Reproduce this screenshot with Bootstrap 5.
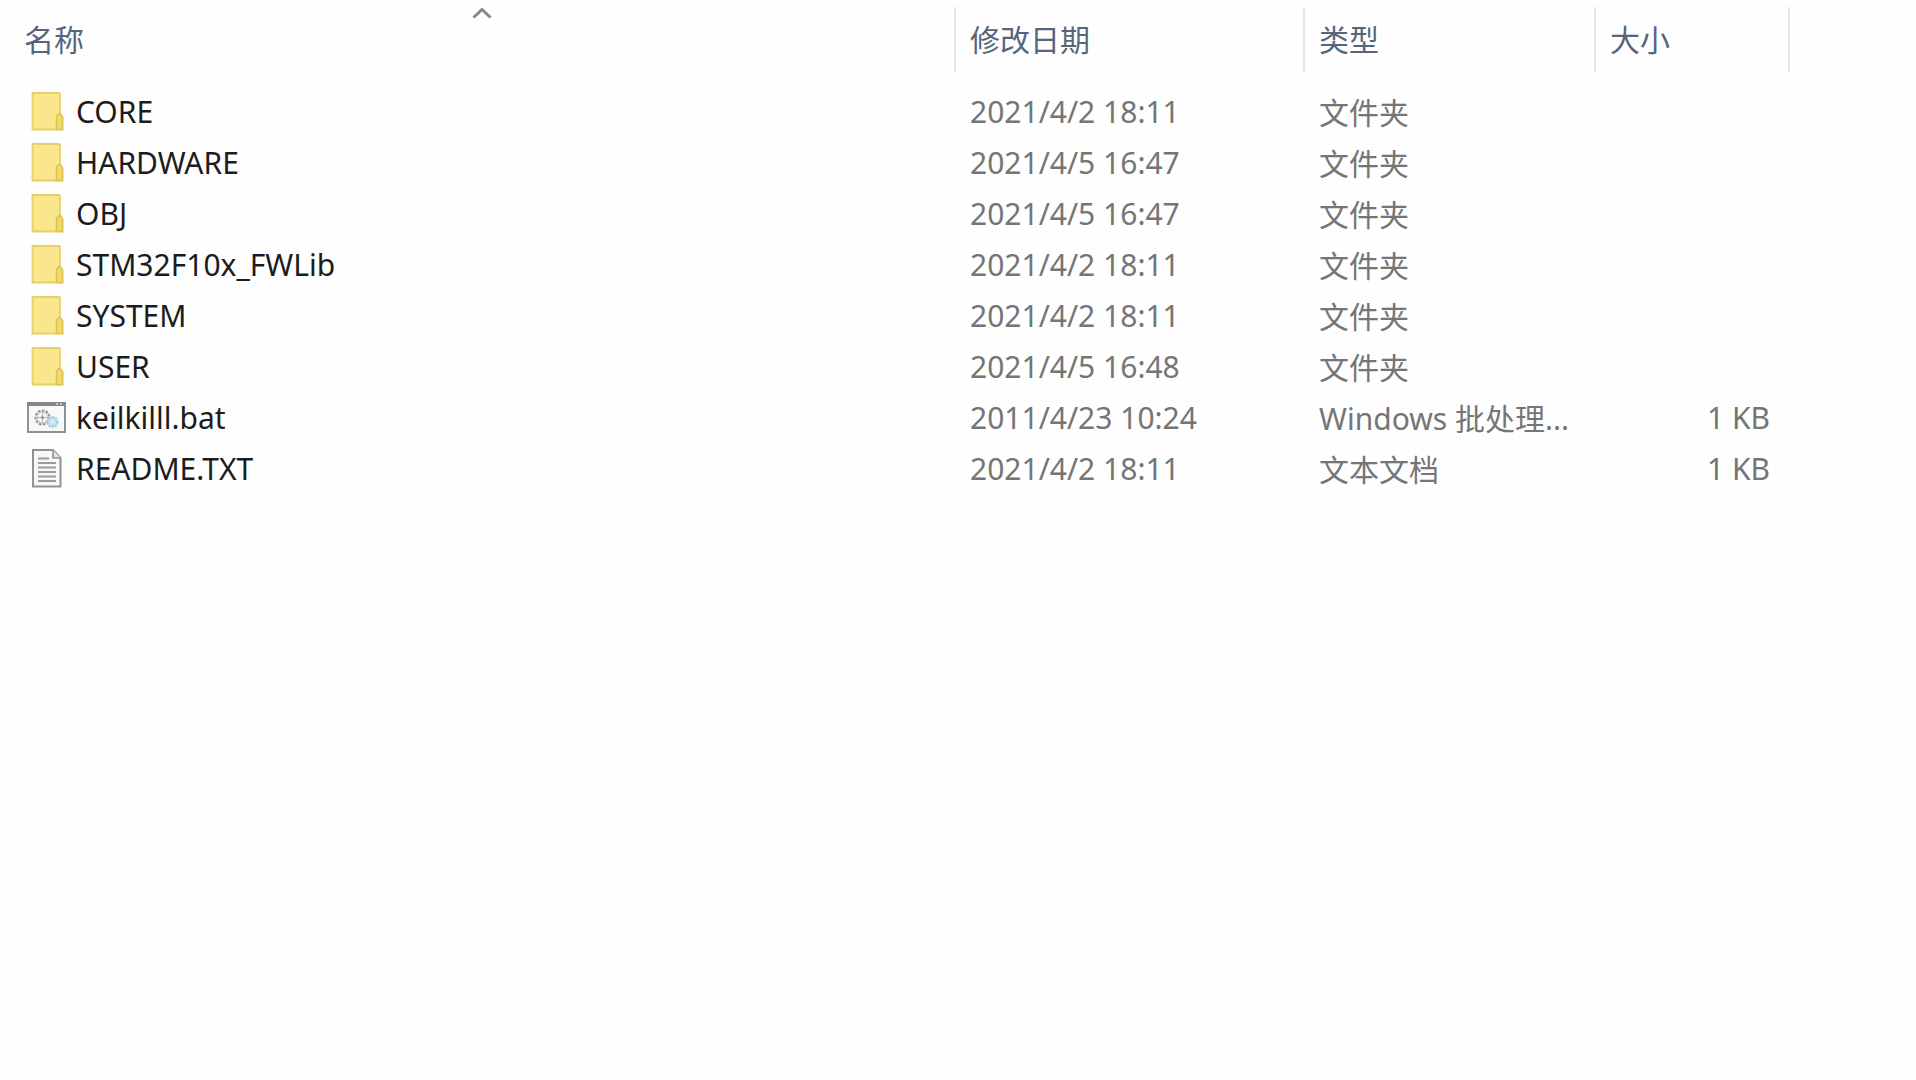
<!DOCTYPE html>
<html lang="zh-CN">
<head>
<meta charset="utf-8">
<meta name="viewport" content="width=device-width, initial-scale=1">
<title>文件列表</title>
<link href="https://cdn.jsdelivr.net/npm/bootstrap@5.3.0/dist/css/bootstrap.min.css" rel="stylesheet">
<style>
  body { background: #fefefe; font-family: "Noto Sans", "Noto Sans CJK SC", sans-serif; font-size: 30px; line-height: 40px; }
  .file-pane { padding: 7px 0 0 8px; }
  .file-list { table-layout: fixed; color: #757575; }
  .col-date { width: 349px; }
  .col-type { width: 291px; }
  .col-size { width: 194px; }
  .col-rest { width: 126px; }
  .file-list th { padding: 0 0 14px; font-weight: 400; }
  .sort-btn { height: 65px; padding: 0 0 3px 14px; border: 0; border-right: 2px solid #e6e6e6; background: none; color: #56657c; font-family: "Noto Sans CJK SC", sans-serif; line-height: 40px; }
  .name-head .sort-btn { padding-left: 16px; }
  .sort-mark { width: 20px; height: 12px; }
  .file-list td { height: 51px; padding: 0 0 0 14px; vertical-align: middle; }
  .file-list td.name-cell { padding-left: 18px; }
  .name-cell a { gap: 10px; color: #1c1c1c; }
  .file-list td.size-cell { padding-right: 20px; }
  .file-list td.type-cell { padding-top: 2px; }
  .file-icon { width: 40px; height: 40px; flex: none; }
</style>
<script src="https://cdn.jsdelivr.net/npm/bootstrap@5.3.0/dist/js/bootstrap.bundle.min.js"></script>
</head>
<body>
<svg class="d-none" aria-hidden="true">
  <symbol id="folder" viewBox="0 0 40 40">
    <path d="M6.500 1h26.500q1 0 1 1v20l2.500 3v12.500h-30z" fill="#fae68c" stroke="#e6d068" stroke-width="1.800"/>
    <path d="M30.500 37.500V26q0-3 2.500-4.500l1.500.5 2 3v12.500z" fill="#f3d96c" stroke="#dcc453" stroke-width="1.500"/>
  </symbol>
  <symbol id="batch" viewBox="0 0 40 40">
    <rect x="2" y="5" width="37" height="29" fill="#f7f8f9" stroke="#8e9194" stroke-width="2"/>
    <path d="M1 4h39v4H1z" fill="#85888b"/>
    <path d="M30 6h2M34 6h2" stroke="#d5d7d8" stroke-width="1.500"/>
    <circle cx="16.500" cy="19.500" r="7" fill="#f4f4f4" stroke="#8d9194" stroke-width="2" stroke-dasharray="2.600 1.400"/>
    <circle cx="16.500" cy="19.500" r="5.600" fill="none" stroke="#b0b3b5" stroke-width="1"/>
    <path d="M16.500 14v11M11 19.500h11" stroke="#b4b8bb" stroke-width="1"/>
    <circle cx="16.500" cy="19.500" r="1.500" fill="#8d9194"/>
    <circle cx="26.500" cy="24" r="5" fill="#c5e3ee" stroke="#a5cbd8" stroke-width="2" stroke-dasharray="2.200 1"/>
    <circle cx="26.500" cy="24" r="1.500" fill="#dceff5"/>
  </symbol>
  <symbol id="textfile" viewBox="0 0 40 40">
    <path d="M7 1h20l7.500 8v28.500H7z" fill="#f8f8f8" stroke="#929292" stroke-width="2"/>
    <path d="M27 1v8h7.500" fill="#e4e4e4" stroke="#929292" stroke-width="1.600"/>
    <path d="M12 9.500h11M12 14h18M12 18.500h18M12 23h18M12 27.500h18M12 32h18" stroke="#9c9c9c" stroke-width="2"/>
  </symbol>
</svg>
<main class="file-pane">
  <table class="file-list w-100">
    <colgroup><col><col class="col-date"><col class="col-type"><col class="col-size"><col class="col-rest"></colgroup>
    <thead>
      <tr>
        <th scope="col" class="name-head position-relative" aria-sort="ascending">
          <button type="button" class="sort-btn w-100 text-start">名称</button>
          <svg class="sort-mark position-absolute top-0 start-50 translate-middle-x" viewBox="0 0 20 12" aria-hidden="true"><path d="M1.500 10.500L10 2.500l8.500 8" fill="none" stroke="#858585" stroke-width="3"/></svg>
        </th>
        <th scope="col"><button type="button" class="sort-btn w-100 text-start">修改日期</button></th>
        <th scope="col"><button type="button" class="sort-btn w-100 text-start">类型</button></th>
        <th scope="col"><button type="button" class="sort-btn w-100 text-start">大小</button></th>
        <td></td>
      </tr>
    </thead>
    <tbody>
      <tr><td class="name-cell"><a href="#" class="d-flex align-items-center text-decoration-none"><svg class="file-icon" aria-hidden="true"><use href="#folder"/></svg>CORE</a></td><td>2021/4/2 18:11</td><td class="type-cell">文件夹</td><td></td><td></td></tr>
      <tr><td class="name-cell"><a href="#" class="d-flex align-items-center text-decoration-none"><svg class="file-icon" aria-hidden="true"><use href="#folder"/></svg>HARDWARE</a></td><td>2021/4/5 16:47</td><td class="type-cell">文件夹</td><td></td><td></td></tr>
      <tr><td class="name-cell"><a href="#" class="d-flex align-items-center text-decoration-none"><svg class="file-icon" aria-hidden="true"><use href="#folder"/></svg>OBJ</a></td><td>2021/4/5 16:47</td><td class="type-cell">文件夹</td><td></td><td></td></tr>
      <tr><td class="name-cell"><a href="#" class="d-flex align-items-center text-decoration-none"><svg class="file-icon" aria-hidden="true"><use href="#folder"/></svg>STM32F10x_FWLib</a></td><td>2021/4/2 18:11</td><td class="type-cell">文件夹</td><td></td><td></td></tr>
      <tr><td class="name-cell"><a href="#" class="d-flex align-items-center text-decoration-none"><svg class="file-icon" aria-hidden="true"><use href="#folder"/></svg>SYSTEM</a></td><td>2021/4/2 18:11</td><td class="type-cell">文件夹</td><td></td><td></td></tr>
      <tr><td class="name-cell"><a href="#" class="d-flex align-items-center text-decoration-none"><svg class="file-icon" aria-hidden="true"><use href="#folder"/></svg>USER</a></td><td>2021/4/5 16:48</td><td class="type-cell">文件夹</td><td></td><td></td></tr>
      <tr><td class="name-cell"><a href="#" class="d-flex align-items-center text-decoration-none"><svg class="file-icon" aria-hidden="true"><use href="#batch"/></svg>keilkilll.bat</a></td><td>2011/4/23 10:24</td><td class="type-cell text-nowrap">Windows 批处理...</td><td class="size-cell text-end">1 KB</td><td></td></tr>
      <tr><td class="name-cell"><a href="#" class="d-flex align-items-center text-decoration-none"><svg class="file-icon" aria-hidden="true"><use href="#textfile"/></svg>README.TXT</a></td><td>2021/4/2 18:11</td><td class="type-cell">文本文档</td><td class="size-cell text-end">1 KB</td><td></td></tr>
    </tbody>
  </table>
</main>
</body>
</html>
